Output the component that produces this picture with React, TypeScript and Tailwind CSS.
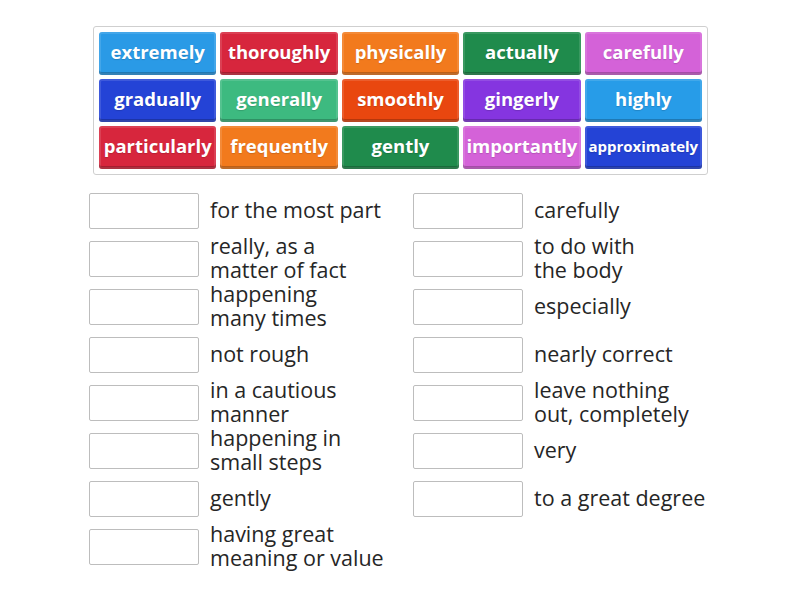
import React from "react";

const tiles: { t: string; c: string; small?: boolean }[] = [
  { t: "extremely", c: "bg-[#2a9ae6]" },
  { t: "thoroughly", c: "bg-[#d7263d]" },
  { t: "physically", c: "bg-[#f27a1d]" },
  { t: "actually", c: "bg-[#1f8b4c]" },
  { t: "carefully", c: "bg-[#d462d8]" },
  { t: "gradually", c: "bg-[#2443d6]" },
  { t: "generally", c: "bg-[#3dba80]" },
  { t: "smoothly", c: "bg-[#e9470f]" },
  { t: "gingerly", c: "bg-[#8535e0]" },
  { t: "highly", c: "bg-[#279ce8]" },
  { t: "particularly", c: "bg-[#d7263d]" },
  { t: "frequently", c: "bg-[#f27a1d]" },
  { t: "gently", c: "bg-[#1f8b4c]" },
  { t: "importantly", c: "bg-[#d462d8]" },
  { t: "approximately", c: "bg-[#2443d6]", small: true },
];

const left: string[][] = [
  ["for the most part"],
  ["really, as a", "matter of fact"],
  ["happening", "many times"],
  ["not rough"],
  ["in a cautious", "manner"],
  ["happening in", "small steps"],
  ["gently"],
  ["having great", "meaning or value"],
];

const right: string[][] = [
  ["carefully"],
  ["to do with", "the body"],
  ["especially"],
  ["nearly correct"],
  ["leave nothing", "out, completely"],
  ["very"],
  ["to a great degree"],
];

function Row({ lines }: { lines: string[] }) {
  return (
    <div className="flex h-[48px] items-center">
      <div className="h-[36px] w-[110px] shrink-0 rounded-[2px] border border-[#bdbdbd] bg-white" />
      <div className="mb-[3px] ml-[11px] text-[21.5px] leading-[24px] text-[#262626]">
        {lines.map((l, i) => (
          <div key={i} className="whitespace-nowrap">
            {l}
          </div>
        ))}
      </div>
    </div>
  );
}

export default function App() {
  return (
    <div
      className="h-[600px] w-[800px] bg-white"
      style={{ fontFamily: '"Open Sans", "Noto Sans", sans-serif' }}
    >
      <div className="pt-[26px]">
        <div className="ml-[93px] w-[615px] rounded-[3px] border border-[#cfcfcf] p-[5px]">
          <div className="grid grid-cols-5 gap-x-[4px] gap-y-[4px]">
            {tiles.map((x, i) => (
              <div
                key={i}
                className={`${x.c} flex h-[43px] items-center justify-center rounded-[3px] pb-[3px] font-bold text-white shadow-[inset_0_-3px_0_rgba(0,0,0,0.22),inset_0_0_0_2px_rgba(255,255,255,0.12)] ${x.small ? "text-[15px]" : "text-[18.5px]"}`}
                style={{ textShadow: "0 1px 1px rgba(0,0,0,0.15)" }}
              >
                {x.t}
              </div>
            ))}
          </div>
        </div>
      </div>
      <div className="mt-[12px] flex pl-[89px]">
        <div className="w-[324px]">
          {left.map((l, i) => (
            <Row key={i} lines={l} />
          ))}
        </div>
        <div>
          {right.map((l, i) => (
            <Row key={i} lines={l} />
          ))}
        </div>
      </div>
    </div>
  );
}
